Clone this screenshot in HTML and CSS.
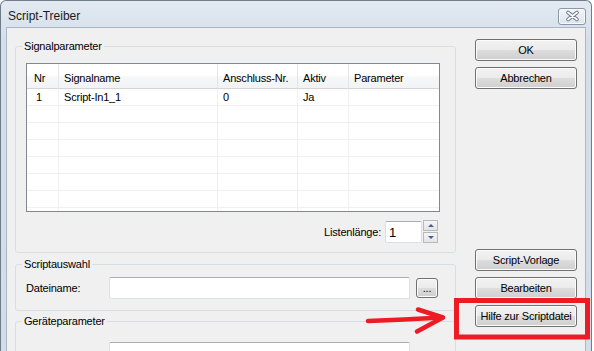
FILE: index.html
```html
<!DOCTYPE html>
<html>
<head>
  <title>Script-Treiber</title>
  <meta charset="utf-8">
  <link rel="stylesheet" href="styles.css">
</head>
<body>
  <div class="window">
    <div class="titlebar">
      <span class="title">Script-Treiber</span>
      <div class="close-btn">
        <svg width="28" height="17" viewBox="0 0 28 17">
          <path d="M10 4.5 L19 11.5 M19 4.5 L10 11.5" stroke="#66768c" stroke-width="3.6" stroke-linecap="round" fill="none"/>
          <path d="M10 4.5 L19 11.5 M19 4.5 L10 11.5" stroke="#ffffff" stroke-width="1.7" stroke-linecap="round" fill="none"/>
        </svg>
      </div>
    </div>

    <div class="client">
      <div class="left">
        <!-- Signalparameter -->
        <fieldset class="group">
          <legend>Signalparameter</legend>
          <div class="group-body signal-body">
            <div class="list">
              <table>
                <colgroup>
                  <col style="width:32px">
                  <col style="width:159px">
                  <col style="width:80px">
                  <col style="width:51px">
                  <col>
                </colgroup>
                <thead>
                  <tr><th>Nr</th><th>Signalname</th><th>Anschluss-Nr.</th><th>Aktiv</th><th class="last">Parameter</th></tr>
                </thead>
                <tbody>
                  <tr><td class="nr">1</td><td>Script-In1_1</td><td>0</td><td>Ja</td><td class="last"></td></tr>
                  <tr><td></td><td></td><td></td><td></td><td class="last"></td></tr>
                  <tr><td></td><td></td><td></td><td></td><td class="last"></td></tr>
                  <tr><td></td><td></td><td></td><td></td><td class="last"></td></tr>
                  <tr><td></td><td></td><td></td><td></td><td class="last"></td></tr>
                  <tr><td></td><td></td><td></td><td></td><td class="last"></td></tr>
                  <tr><td></td><td></td><td></td><td></td><td class="last"></td></tr>
                  <tr><td></td><td></td><td></td><td></td><td class="last"></td></tr>
                </tbody>
              </table>
            </div>
            <div class="list-length">
              <span class="label">Listenlänge:</span>
              <div class="textbox num">1</div>
              <div class="spin">
                <div class="spin-btn"><span class="tri-up"></span></div>
                <div class="spin-btn"><span class="tri-down"></span></div>
              </div>
            </div>
          </div>
        </fieldset>

        <!-- Scriptauswahl -->
        <fieldset class="group group-script">
          <legend>Scriptauswahl</legend>
          <div class="group-body script-body">
            <span class="field-label">Dateiname:</span>
            <div class="textbox file"></div>
            <button class="button browse">...</button>
          </div>
        </fieldset>

        <!-- Geräteparameter -->
        <fieldset class="group group-device">
          <legend>Geräteparameter</legend>
          <div class="group-body device-body">
            <span class="field-label">Parameter 1</span>
            <div class="textbox file"></div>
          </div>
        </fieldset>
      </div>

      <div class="right">
        <button class="button">OK</button>
        <button class="button">Abbrechen</button>
        <button class="button gap">Script-Vorlage</button>
        <button class="button">Bearbeiten</button>
        <button class="button">Hilfe zur Scriptdatei</button>
      </div>
    </div>
  </div>

  <!-- Markierung -->
  <svg class="annotation" width="594" height="351" viewBox="0 0 594 351">
    <rect x="456.5" y="300.5" width="131" height="36.5" fill="none" stroke="#ed1c24" stroke-width="5"/>
    <path d="M368 321 L404 319.5 L442 317.5" fill="none" stroke="#ed1c24" stroke-width="4.6" stroke-linecap="round"/>
    <path d="M418 309.5 L443 317.5 L417 331.5" fill="none" stroke="#ed1c24" stroke-width="4.6" stroke-linecap="round" stroke-linejoin="round"/>
  </svg>
</body>
</html>
```

FILE: styles.css
```css
/* Seite */
body {
  margin: 0;
  position: relative;
  background: #ffffff;
  font-family: "Liberation Sans", Arial, sans-serif;
  font-size: 11px;
  letter-spacing: -0.2px;
  color: #000;
}

/* Fensterrahmen */
.window {
  width: 592px;
  height: 351px;
  box-sizing: border-box;
  border: 1px solid #6f7c8c;
  border-bottom: none;
  border-radius: 6px 6px 0 0;
  padding: 0 5px;
  background: linear-gradient(#e2e9f2, #d5dfea 40px, #d3dde9);
  overflow: hidden;
}

.titlebar {
  height: 26px;
  display: flex;
  align-items: flex-start;
  justify-content: space-between;
}

.title {
  font-size: 12px;
  letter-spacing: 0;
  line-height: 14px;
  margin: 8px 0 0 2px;
  color: #1b1b1b;
}

.close-btn {
  width: 28px;
  height: 17px;
  margin-top: 7px;
  box-sizing: border-box;
  border: 1px solid #8a97a8;
  border-radius: 3px;
  background: linear-gradient(#f1f4f8, #dde4ec);
  box-shadow: inset 0 0 0 1px rgba(255, 255, 255, 0.7);
  position: relative;
}

.close-btn svg {
  position: absolute;
  left: -1px;
  top: -1px;
}

/* Clientbereich */
.client {
  height: 340px;
  box-sizing: border-box;
  border: 1px solid #aab7c6;
  border-bottom: none;
  background: #f0f0f0;
  padding-top: 11px;
  display: flex;
  align-items: flex-start;
}

.left {
  margin-left: 8px;
  width: 441px;
}

.right {
  margin-left: 19px;
  width: 102px;
  display: flex;
  flex-direction: column;
}

/* Gruppenrahmen */
.group {
  margin: 0;
  padding: 0;
  min-width: 0;
  border: 1px solid #d5dfe5;
  border-radius: 3px;
}

.group legend {
  padding: 0 2px;
  margin-left: 6px;
  line-height: 14px;
}

.group-script {
  margin-top: 4px;
}

.group-device {
  margin-top: 3px;
}

.signal-body {
  padding: 10px 15px 9px 10px;
}

.script-body {
  padding: 6px 17px 11px 10px;
  display: flex;
  align-items: center;
}

.device-body {
  padding: 14px 17px 10px 10px;
  display: flex;
  align-items: flex-end;
}

.field-label {
  width: 83px;
  flex-shrink: 0;
}

.device-body .field-label {
  margin-bottom: -8px;
}

/* Liste */
.list {
  width: 414px;
  height: 149px;
  box-sizing: border-box;
  border: 1px solid #828790;
  background: #ffffff;
  overflow: hidden;
}

.list table {
  width: 412px;
  table-layout: fixed;
  border-collapse: separate;
  border-spacing: 0;
}

.list th {
  height: 25px;
  box-sizing: border-box;
  padding: 3px 0 0 5px;
  text-align: left;
  font-weight: normal;
  background: linear-gradient(#ffffff 0%, #ffffff 45%, #f6f7f8 55%, #f2f3f5 100%);
  border-right: 1px solid #e3e5e8;
  border-bottom: 1px solid #d5d5d5;
  white-space: nowrap;
}

.list td {
  height: 17px;
  box-sizing: border-box;
  padding: 0 0 0 5px;
  border-right: 1px solid #f0f0f0;
  border-bottom: 1px solid #f0f0f0;
  white-space: nowrap;
}

.list td.nr {
  padding-left: 9px;
}

.list th:first-child {
  padding-left: 7px;
}

.list .last {
  border-right: none;
}

.list-length {
  margin-top: 8px;
  padding-right: 2px;
  display: flex;
  justify-content: flex-end;
  align-items: center;
}

.list-length .label {
  margin-right: 4px;
}

/* Eingabefelder */
.textbox {
  height: 22px;
  box-sizing: border-box;
  background: #ffffff;
  border: 1px solid #dbdfe6;
  border-top-color: #abadb3;
  border-radius: 2px;
}

.textbox.num {
  width: 37px;
  padding: 3px 0 0 3px;
  font-size: 13px;
  line-height: 15px;
}

.textbox.file {
  width: 301px;
}

.spin {
  margin-left: 1px;
  display: flex;
  flex-direction: column;
  gap: 1px;
}

.spin-btn {
  width: 15px;
  height: 11px;
  box-sizing: border-box;
  border: 1px solid #b5b9c0;
  background: linear-gradient(#f6f6f6, #e4e4e4);
  display: flex;
  align-items: center;
  justify-content: center;
}

.tri-up {
  width: 0;
  height: 0;
  border-left: 3px solid transparent;
  border-right: 3px solid transparent;
  border-bottom: 3px solid #4a5f85;
}

.tri-down {
  width: 0;
  height: 0;
  border-left: 3px solid transparent;
  border-right: 3px solid transparent;
  border-top: 3px solid #4a5f85;
}

/* Schaltflächen */
.button {
  height: 22px;
  margin: 0 0 6px 0;
  padding: 0;
  box-sizing: border-box;
  font-family: "Liberation Sans", Arial, sans-serif;
  font-size: 11px;
  letter-spacing: -0.2px;
  color: #000;
  border: 1px solid #707070;
  border-radius: 3px;
  background: linear-gradient(#f2f2f2 0%, #ebebeb 50%, #dddddd 50%, #cfcfcf 100%);
  box-shadow: inset 0 0 0 1px #fcfcfc;
}

.button.gap {
  margin-top: 154px;
}

.button.browse {
  width: 22px;
  height: 20px;
  margin: 0 0 0 6px;
}

/* Markierung über dem Fenster */
.annotation {
  position: absolute;
  top: 0;
  left: 0;
  pointer-events: none;
}
```
